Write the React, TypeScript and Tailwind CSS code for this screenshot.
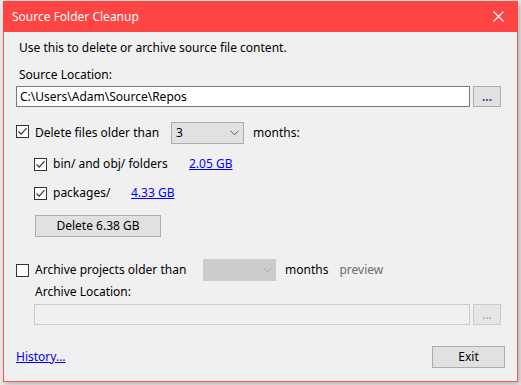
import React from "react";

const font = { fontFamily: '"Noto Sans", "Liberation Sans", Arial, sans-serif' };

function Check({ checked = false }: { checked?: boolean }) {
  return (
    <span className="flex h-[13px] w-[13px] shrink-0 items-center justify-center border border-[#333333] bg-white">
      {checked && (
        <svg width="11" height="11" viewBox="0 0 11 11">
          <path d="M1.5 5.5 L4.2 8.2 L9.5 2.2" fill="none" stroke="#333333" strokeWidth="1.2" />
        </svg>
      )}
    </span>
  );
}

function Chevron({ color = "#555555" }: { color?: string }) {
  return (
    <svg width="9" height="6" viewBox="0 0 9 6">
      <path d="M0.5 0.8 L4.5 4.8 L8.5 0.8" fill="none" stroke={color} strokeWidth="1" />
    </svg>
  );
}

export default function App() {
  return (
    <div
      className="h-[385px] w-[521px] overflow-hidden bg-[#ebebeb] pl-[3px] pt-[1px] text-[12px] text-black"
      style={font}
    >
      <div className="flex h-[381px] w-[515px] flex-col shadow-[2px_2px_6px_rgba(0,0,0,0.25)]">
        {/* title bar */}
        <div className="flex h-[31px] shrink-0 items-center justify-between bg-[#ff4444] pl-[9px] pr-[14px] text-white">
          <span className="text-[12px]">Source Folder Cleanup</span>
          <svg width="11" height="11" viewBox="0 0 11 11">
            <path d="M0.5 0.5 L10.5 10.5 M10.5 0.5 L0.5 10.5" stroke="white" strokeWidth="1.1" />
          </svg>
        </div>

        {/* body */}
        <div className="flex flex-1 flex-col border-x border-b border-[#f25555] bg-[#f0f0f0] pl-[12px] leading-[16px]">
          <div className="ml-[3px] mt-[8px]">Use this to delete or archive source file content.</div>
          <div className="ml-[3px] mt-[11px]">Source Location:</div>

          <div className="mt-[3px] flex h-[21px] items-center">
            <div className="flex h-[21px] w-[454px] items-center border border-[#7a7a7a] bg-white pl-[3px]">
              C:\Users\Adam\Source\Repos
            </div>
            <div className="ml-[3px] flex h-[21px] w-[28px] items-center justify-center border border-[#adadad] bg-[#e1e1e1] font-bold text-[#1d4f7c]">
              ...
            </div>
          </div>

          {/* delete section */}
          <div className="mt-[15px] flex h-[22px] items-center">
            <span className="-mt-[4px]">
              <Check checked />
            </span>
            <span className="ml-[6px] w-[136px]">Delete files older than</span>
            <div className="flex h-[22px] w-[73px] items-center justify-between border border-[#adadad] bg-[#e1e1e1] pl-[4px] pr-[4px]">
              <span>3</span>
              <Chevron />
            </div>
            <span className="ml-[9px]">months:</span>
          </div>

          <div className="ml-[18px] mt-[12px] flex h-[16px] items-center">
            <Check checked />
            <span className="ml-[6px] w-[136px]">bin/ and obj/ folders</span>
            <span className="text-[#0000ff] underline">2.05 GB</span>
          </div>

          <div className="ml-[18px] mt-[13px] flex h-[16px] items-center">
            <Check checked />
            <span className="ml-[6px] w-[78px]">packages/</span>
            <span className="text-[#0000ff] underline">4.33 GB</span>
          </div>

          <div className="ml-[19px] mt-[14px] flex h-[22px] w-[126px] items-center justify-center border border-[#adadad] bg-[#e1e1e1]">
            Delete 6.38 GB
          </div>

          {/* archive section */}
          <div className="mt-[22px] flex h-[22px] items-center">
            <Check />
            <span className="ml-[6px] w-[168px]">Archive projects older than</span>
            <div className="flex h-[22px] w-[73px] items-center justify-end bg-[#cccccc] pr-[4px]">
              <Chevron color="#a8a8a8" />
            </div>
            <span className="ml-[9px]">months</span>
            <span className="ml-[11px] text-[#6d6d6d]">preview</span>
          </div>

          <div className="ml-[19px] mt-[3px]">Archive Location:</div>

          <div className="ml-[18px] mt-[4px] flex h-[21px] items-center">
            <div className="h-[21px] w-[436px] border border-[#cccccc] bg-[#f0f0f0]" />
            <div className="ml-[3px] flex h-[21px] w-[28px] items-center justify-center border border-[#cccccc] bg-[#e6e6e6] text-[#a0a0a0]">
              ...
            </div>
          </div>

          <div className="mt-[21px] flex h-[22px] items-center justify-between pr-[12px]">
            <span className="text-[#0000ff] underline">History...</span>
            <div className="flex h-[22px] w-[73px] items-center justify-center border border-[#adadad] bg-[#e1e1e1]">
              Exit
            </div>
          </div>
        </div>
      </div>
    </div>
  );
}
